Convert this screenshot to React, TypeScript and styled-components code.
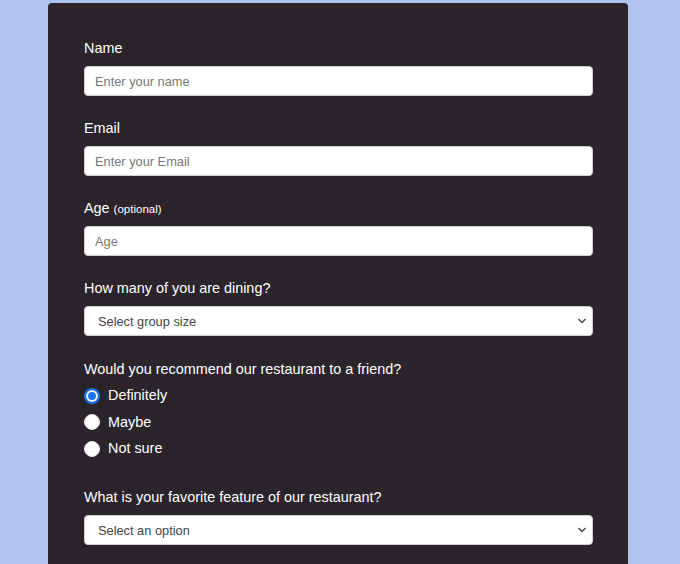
import React from "react";
import styled, { createGlobalStyle } from "styled-components";

const GlobalStyle = createGlobalStyle`
  html, body {
    margin: 0;
    padding: 0;
    background: #b0c2ee;
  }
  body {
    font-family: "Liberation Sans", Arial, sans-serif;
  }
`;

const Page = styled.div`
  padding: 3px 0 0 48px;
  height: 564px;
  overflow: hidden;
  box-sizing: border-box;
`;

const Card = styled.form`
  width: 580px;
  box-sizing: border-box;
  background: #2b252b;
  border-radius: 4px;
  padding: 37px 35px 40px 36px;
  color: #ffffff;
  display: flex;
  flex-direction: column;
  gap: 24px;
`;

const Field = styled.div`
  display: flex;
  flex-direction: column;
  gap: 9px;
`;

const Label = styled.label`
  font-size: 14.4px;
  line-height: 17px;
  height: 17px;
  color: #ffffff;
`;

const Hint = styled.span`
  font-size: 11.5px;
  line-height: 1;
`;

const TextInput = styled.input`
  box-sizing: border-box;
  width: 100%;
  height: 30px;
  padding: 0 10px;
  border: 1px solid #cfcfcf;
  border-radius: 4px;
  background: #ffffff;
  font-family: "Liberation Sans", Arial, sans-serif;
  font-size: 12.8px;
  color: #333;
  outline: none;
  &::placeholder {
    color: #777777;
  }
`;

const SelectWrap = styled.div`
  position: relative;
`;

const Select = styled.select`
  box-sizing: border-box;
  width: 100%;
  height: 30px;
  padding: 0 13px;
  border: 1px solid #cfcfcf;
  border-radius: 4px;
  background: #ffffff;
  font-family: "Liberation Sans", Arial, sans-serif;
  font-size: 12.8px;
  color: #444444;
  appearance: none;
  outline: none;
`;

const Chevron = styled.svg`
  position: absolute;
  right: 6px;
  top: 11px;
  pointer-events: none;
`;

const RadioGroup = styled.div`
  display: flex;
  flex-direction: column;
  gap: 9px;
  margin: 1px 0 8px;
`;

const Options = styled.div`
  display: flex;
  flex-direction: column;
  gap: 9.5px;
`;

const RadioRow = styled.label`
  display: flex;
  align-items: center;
  gap: 8px;
  font-size: 14.4px;
  line-height: 17px;
`;

const Radio = styled.input`
  appearance: none;
  margin: 0;
  width: 16px;
  height: 16px;
  border-radius: 50%;
  background: #ffffff;
  border: 1px solid #e6e6e6;
  box-sizing: border-box;
  &:checked {
    border: 2px solid #1a73e8;
    box-shadow: inset 0 0 0 2px #ffffff;
    background: #1a73e8;
  }
`;

function SelectField({ label, placeholder }: { label: string; placeholder: string }) {
  return (
    <Field>
      <Label>{label}</Label>
      <SelectWrap>
        <Select defaultValue="">
          <option value="" disabled>
            {placeholder}
          </option>
        </Select>
        <Chevron width="10" height="8" viewBox="0 0 10 8">
          <path d="M1.5 2 L5 5.5 L8.5 2" fill="none" stroke="#444" strokeWidth="1.4" />
        </Chevron>
      </SelectWrap>
    </Field>
  );
}

export default function App() {
  return (
    <Page>
      <GlobalStyle />
      <Card onSubmit={(e) => e.preventDefault()}>
        <Field>
          <Label>Name</Label>
          <TextInput placeholder="Enter your name" />
        </Field>
        <Field>
          <Label>Email</Label>
          <TextInput placeholder="Enter your Email" />
        </Field>
        <Field>
          <Label>
            Age <Hint>(optional)</Hint>
          </Label>
          <TextInput placeholder="Age" />
        </Field>
        <SelectField label="How many of you are dining?" placeholder="Select group size" />
        <RadioGroup>
          <Label>Would you recommend our restaurant to a friend?</Label>
          <Options>
            <RadioRow>
              <Radio type="radio" name="rec" defaultChecked />
              Definitely
            </RadioRow>
            <RadioRow>
              <Radio type="radio" name="rec" />
              Maybe
            </RadioRow>
            <RadioRow>
              <Radio type="radio" name="rec" />
              Not sure
            </RadioRow>
          </Options>
        </RadioGroup>
        <SelectField label="What is your favorite feature of our restaurant?" placeholder="Select an option" />
      </Card>
    </Page>
  );
}
